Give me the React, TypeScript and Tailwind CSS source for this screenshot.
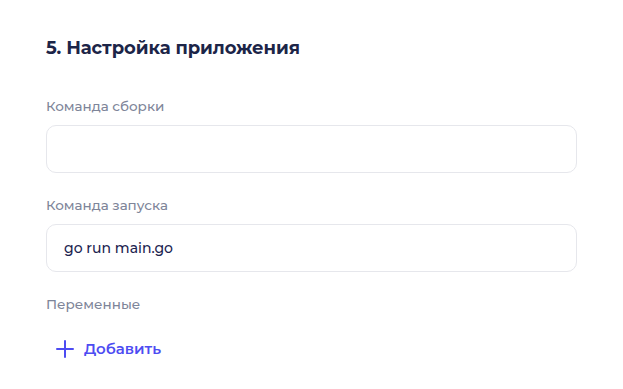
import React from "react";

export default function App() {
  return (
    <div className="w-[623px] h-[389px] bg-white" style={{ fontFamily: '"Montserrat", Inter, "Noto Sans", sans-serif' }}>
      <div className="pl-[46px] pr-[46px] pt-[36px] flex flex-col">
        <h2 className="text-[18px] leading-[24px] font-bold text-[#1c2548] tracking-[-0.1px]">5. Настройка приложения</h2>
        <div className="mt-[36px] flex flex-col">
          <label className="text-[13.5px] leading-[20px] font-medium text-[#7e8599]">Команда сборки</label>
          <div className="mt-[9px] h-[48px] w-[531px] rounded-[10px] border border-[#e6e7ec] bg-white"></div>
        </div>
        <div className="mt-[22px] flex flex-col">
          <label className="text-[13.5px] leading-[20px] font-medium text-[#7e8599]">Команда запуска</label>
          <div className="mt-[9px] h-[48px] w-[531px] rounded-[10px] border border-[#e6e7ec] bg-white flex items-center px-[17px]">
            <span className="text-[14px] font-medium text-[#1c2450]">go run main.go</span>
          </div>
        </div>
        <div className="mt-[22px] flex flex-col">
          <label className="text-[13.5px] leading-[20px] font-medium text-[#7e8599]">Переменные</label>
          <button className="mt-[24px] ml-[10px] flex items-center gap-[10px] text-[#4d4cf2]">
            <svg width="18" height="18" viewBox="0 0 18 18" fill="none">
              <path d="M9 1v16M1 9h16" stroke="#4d4cf2" strokeWidth="2" strokeLinecap="round" />
            </svg>
            <span className="text-[15px] leading-[22px] font-semibold">Добавить</span>
          </button>
        </div>
      </div>
    </div>
  );
}
